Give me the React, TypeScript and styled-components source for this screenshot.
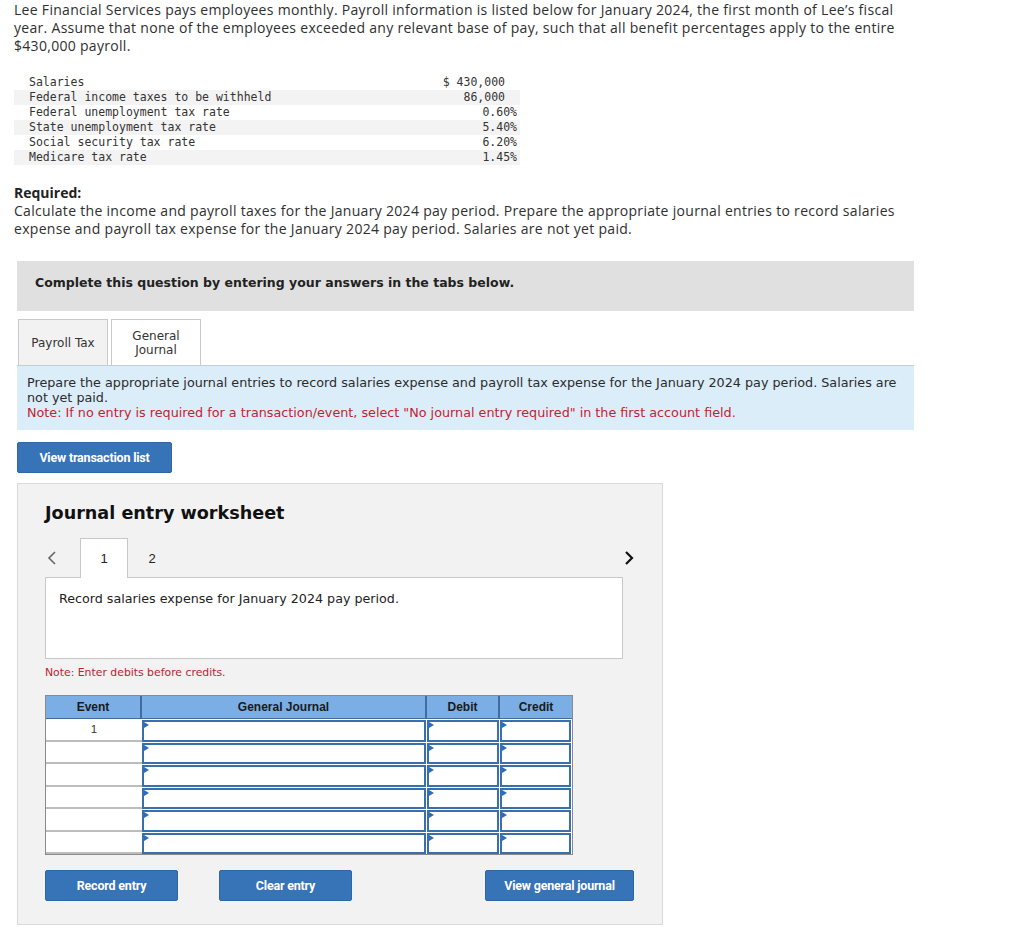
import React from 'react';
import styled, { createGlobalStyle } from 'styled-components';

const GlobalStyle = createGlobalStyle`
  body {
    margin: 0;
    background: #ffffff;
    color: #2b2b2b;
    font-family: 'Open Sans', 'Liberation Sans', sans-serif;
  }
`;

const dataRows = [
  { label: 'Salaries', value: '$ 430,000', percent: false },
  { label: 'Federal income taxes to be withheld', value: '86,000', percent: false },
  { label: 'Federal unemployment tax rate', value: '0.60%', percent: true },
  { label: 'State unemployment tax rate', value: '5.40%', percent: true },
  { label: 'Social security tax rate', value: '6.20%', percent: true },
  { label: 'Medicare tax rate', value: '1.45%', percent: true },
];

const journalRows = ['1', '', '', '', '', ''];

const ChevronLeft = () => (
  <svg width='10' height='16' viewBox='0 0 10 16'>
    <polyline points='8,2 2,8 8,14' fill='none' stroke='#666' strokeWidth='1.6' />
  </svg>
);

const ChevronRight = () => (
  <svg width='10' height='16' viewBox='0 0 10 16'>
    <polyline points='2,2 8,8 2,14' fill='none' stroke='#111' strokeWidth='2.2' />
  </svg>
);

const App = () => {
  return (
    <Page>
      <GlobalStyle />
      <Intro>
        Lee Financial Services pays employees monthly. Payroll information is listed below for January 2024, the first
        month of Lee’s fiscal
        <br />
        year. Assume that none of the employees exceeded any relevant base of pay, such that all benefit percentages
        apply to the entire
        <br />
        $430,000 payroll.
      </Intro>

      <DataTable>
        {dataRows.map((row, i) => (
          <DataRow key={row.label} $shaded={i % 2 === 1}>
            <span>{row.label}</span>
            <DataValue $percent={row.percent}>{row.value}</DataValue>
          </DataRow>
        ))}
      </DataTable>

      <Required>
        <strong>Required:</strong>
        <br />
        Calculate the income and payroll taxes for the January 2024 pay period. Prepare the appropriate journal entries
        to record salaries
        <br />
        expense and payroll tax expense for the January 2024 pay period. Salaries are not yet paid.
      </Required>

      <Instruction>Complete this question by entering your answers in the tabs below.</Instruction>

      <TabBar>
        <Tab>Payroll Tax</Tab>
        <Tab $active>
          General
          <br />
          Journal
        </Tab>
      </TabBar>

      <InfoPanel>
        Prepare the appropriate journal entries to record salaries expense and payroll tax expense for the January 2024
        pay period. Salaries are
        <br />
        not yet paid.
        <RedNote>Note: If no entry is required for a transaction/event, select "No journal entry required" in the first account field.</RedNote>
      </InfoPanel>

      <ActionButton $width='155px'>View transaction list</ActionButton>

      <Worksheet>
        <WorksheetTitle>Journal entry worksheet</WorksheetTitle>

        <PagerRow>
          <PagerArrow>
            <ChevronLeft />
          </PagerArrow>
          <PageTab $active>1</PageTab>
          <PageTab>2</PageTab>
          <PagerSpacer />
          <PagerArrow>
            <ChevronRight />
          </PagerArrow>
        </PagerRow>

        <Description>Record salaries expense for January 2024 pay period.</Description>

        <SmallNote>Note: Enter debits before credits.</SmallNote>

        <JournalGrid>
          <HeaderCell>Event</HeaderCell>
          <HeaderCell>General Journal</HeaderCell>
          <HeaderCell>Debit</HeaderCell>
          <HeaderCell $last>Credit</HeaderCell>
          {journalRows.map((ev, i) => (
            <React.Fragment key={i}>
              <EventCell>{ev}</EventCell>
              <InputCell />
              <InputCell />
              <InputCell />
            </React.Fragment>
          ))}
        </JournalGrid>

        <ButtonRow>
          <ActionButton $width='133px'>Record entry</ActionButton>
          <ActionButton $width='133px'>Clear entry</ActionButton>
          <ButtonSpacer />
          <ActionButton $width='149px'>View general journal</ActionButton>
        </ButtonRow>
      </Worksheet>
    </Page>
  );
};

const Page = styled.div`
  width: 1024px;
  padding: 1px 0 20px 0;
  box-sizing: border-box;
`;

const Intro = styled.p`
  margin: 0 0 0 14px;
  width: 990px;
  font-size: 14px;
  line-height: 18px;
  letter-spacing: 0.3px;
  color: #2f2f2f;
`;

const DataTable = styled.div`
  margin: 20px 0 0 14px;
  width: 506px;
  font-family: 'DejaVu Sans Mono', 'Liberation Mono', monospace;
  font-size: 11.5px;
  color: #333;
`;

const DataRow = styled.div<{ $shaded: boolean }>`
  display: flex;
  justify-content: space-between;
  height: 15px;
  line-height: 15px;
  padding-left: 15px;
  background: ${(p) => (p.$shaded ? '#f3f3f3' : 'transparent')};
`;

const DataValue = styled.span<{ $percent: boolean }>`
  padding-right: ${(p) => (p.$percent ? '3px' : '15px')};
`;

const Required = styled.p`
  margin: 19px 0 0 14px;
  width: 990px;
  font-size: 14px;
  line-height: 18px;
  letter-spacing: 0.3px;
  color: #2f2f2f;

  strong {
    font-weight: 700;
    letter-spacing: 0;
    color: #222;
  }
`;

const Instruction = styled.div`
  margin: 23px 0 0 17px;
  width: 897px;
  height: 50px;
  box-sizing: border-box;
  padding: 0 0 7px 18px;
  display: flex;
  align-items: center;
  background: #e0e0e0;
  font-family: 'DejaVu Sans', Verdana, sans-serif;
  font-weight: 700;
  font-size: 12.5px;
  color: #222;
`;

const TabBar = styled.div`
  margin: 8px 0 0 18px;
  display: flex;
  column-gap: 3px;
`;

const Tab = styled.div<{ $active?: boolean }>`
  width: 90px;
  height: 46px;
  box-sizing: border-box;
  display: flex;
  align-items: center;
  justify-content: center;
  text-align: center;
  border: 1px solid #c9c9c9;
  border-bottom: none;
  background: ${(p) => (p.$active ? '#ffffff' : '#f2f2f2')};
  font-family: 'DejaVu Sans', Verdana, sans-serif;
  font-size: 12px;
  line-height: 14px;
  color: #333;
`;

const InfoPanel = styled.div`
  margin-left: 17px;
  width: 897px;
  height: 65px;
  box-sizing: border-box;
  padding: 9px 0 0 10px;
  background: #dcedfa;
  border-top: 1px solid #c4ccd4;
  font-family: 'DejaVu Sans', Verdana, sans-serif;
  font-size: 12.75px;
  line-height: 15px;
  white-space: nowrap;
  color: #2b2b2b;
`;

const RedNote = styled.div`
  color: #c0242e;
`;

const ActionButton = styled.div<{ $width: string }>`
  width: ${(p) => p.$width};
  height: 31px;
  box-sizing: border-box;
  display: flex;
  align-items: center;
  justify-content: center;
  background: #3673b7;
  border: 1px solid #2f66a4;
  border-radius: 2px;
  color: #ffffff;
  font-family: 'Liberation Sans Narrow', 'Roboto', sans-serif;
  font-weight: 700;
  font-size: 12.5px;
  letter-spacing: -0.2px;

  ${Page} > & {
    margin: 12px 0 0 17px;
  }
`;

const Worksheet = styled.div`
  margin: 10px 0 0 17px;
  width: 646px;
  box-sizing: border-box;
  padding: 18px 0 23px 27px;
  background: #f2f2f2;
  border: 1px solid #dadada;
`;

const WorksheetTitle = styled.div`
  font-family: 'DejaVu Sans', Verdana, sans-serif;
  font-weight: 700;
  font-size: 17.6px;
  line-height: 22px;
  color: #111;
`;

const PagerRow = styled.div`
  margin-top: 14px;
  display: flex;
  align-items: stretch;
  width: 591px;
  height: 40px;
  position: relative;
  z-index: 1;
`;

const PagerArrow = styled.div`
  width: 14px;
  display: flex;
  align-items: center;
  justify-content: center;
`;

const PagerSpacer = styled.div`
  flex: 1;
`;

const PageTab = styled.div<{ $active?: boolean }>`
  width: 48px;
  box-sizing: border-box;
  display: flex;
  align-items: center;
  justify-content: center;
  font-family: 'Liberation Sans', Arial, sans-serif;
  font-size: 13px;
  color: #222;
  background: ${(p) => (p.$active ? '#ffffff' : 'transparent')};
  border: 1px solid ${(p) => (p.$active ? '#c8c8c8' : 'transparent')};
  border-bottom: none;

  &:nth-child(2) {
    margin-left: 21px;
  }
`;

const Description = styled.div`
  margin-top: -1px;
  width: 578px;
  height: 82px;
  box-sizing: border-box;
  padding: 13px 14px 0 13px;
  background: #ffffff;
  border: 1px solid #c8c8c8;
  font-family: 'DejaVu Sans', Verdana, sans-serif;
  font-size: 12.7px;
  line-height: 16px;
  color: #222;
`;

const SmallNote = styled.div`
  margin-top: 7px;
  font-family: 'DejaVu Sans', Verdana, sans-serif;
  font-size: 10.85px;
  line-height: 14px;
  color: #b8262f;
`;

const JournalGrid = styled.div`
  margin-top: 15px;
  display: grid;
  grid-template-columns: 96px 285px 73px 72px;
  grid-auto-rows: 22.5px;
  grid-template-rows: 23px;
  width: 526px;
  box-sizing: content-box;
  border: 1px solid #8a8a8a;
  background: #ffffff;
`;

const HeaderCell = styled.div<{ $last?: boolean }>`
  display: flex;
  align-items: center;
  justify-content: center;
  background: #7aaee4;
  border-right: ${(p) => (p.$last ? 'none' : '2px solid #3f6d9e')};
  border-bottom: 1px solid #3f6d9e;
  font-family: 'Liberation Sans', Arial, sans-serif;
  font-weight: 700;
  font-size: 12px;
  color: #1a1a1a;
`;

const EventCell = styled.div`
  display: flex;
  align-items: center;
  justify-content: center;
  background: #ffffff;
  border-bottom: 2px solid #bdbdbd;
  font-family: 'Liberation Sans', Arial, sans-serif;
  font-size: 11.5px;
  color: #333;
`;

const InputCell = styled.div`
  position: relative;
  margin: 1px 1px 0 0;
  background: #ffffff;
  border: 2px solid #3a6fae;
  box-sizing: border-box;

  &::before {
    content: '';
    position: absolute;
    top: 0;
    left: 0;
    border-left: 5px solid #2b6cc0;
    border-top: 3px solid transparent;
    border-bottom: 3px solid transparent;
  }
`;

const ButtonRow = styled.div`
  margin-top: 15px;
  display: flex;
  column-gap: 41px;
  width: 589px;
`;

const ButtonSpacer = styled.div`
  flex: 1;
`;

export default App;
